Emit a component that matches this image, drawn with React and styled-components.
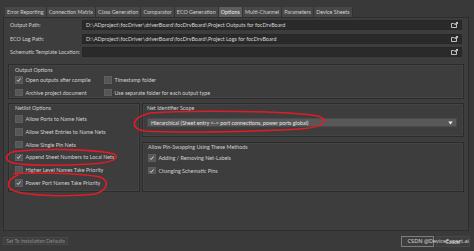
import React from "react";
import styled, { createGlobalStyle } from "styled-components";

const GlobalStyle = createGlobalStyle`
  html, body { margin: 0; padding: 0; background: #3a3a3a; }
  body { font-family: Lato, "Open Sans", sans-serif; }
`;

const Window = styled.div`
  position: relative;
  width: 474px;
  height: 251px;
  overflow: hidden;
  background: #393939;
  color: #d0d0d0;
  font-size: 5.4px;
  display: flex;
  flex-direction: column;
`;

const TabBar = styled.div`
  display: flex;
  margin: 7px 0 0 5px;
  height: 10px;
`;

const Tab = styled.div`
  padding: 0 2.1px;
  line-height: 10px;
  white-space: nowrap;
  background: ${p => (p.$active ? "#5d5d5d" : "#474747")};
  color: ${p => (p.$active ? "#ececec" : "#cfcfcf")};
  border-right: 1px solid #323232;
`;

const Panel = styled.div`
  margin: 0 5px 0 3px;
  height: 210px;
  border: 1px solid #2d2d2d;
  background: #3d3d3d;
  padding: 2px 4px 0 4px;
  display: flex;
  flex-direction: column;
`;

const FieldRow = styled.div`
  display: flex;
  align-items: center;
  height: 10px;
  padding: 0 2px 0 2px;
  margin-bottom: 3.5px;
`;

const FieldLabel = styled.div`
  width: 72px;
  white-space: nowrap;
`;

const Input = styled.div`
  flex: 1;
  height: 10px;
  background: #2a2a2a;
  border: 1px solid #272727;
  box-sizing: border-box;
  display: flex;
  align-items: center;
  padding: 0 3px 0 3px;
  color: #d6d6d6;
  white-space: nowrap;
`;

const InputText = styled.span`
  flex: 1;
`;

const Group = styled.div`
  border: 1px solid #2c2c2c;
  box-shadow: inset 0 0 0 1px #444;
  padding: ${p => p.$pad || "1px 5px 1.5px 6px"};
  display: flex;
  flex-direction: column;
  box-sizing: border-box;
  height: ${p => p.$h};
`;

const GroupTitle = styled.div`
  height: 8px;
  line-height: 8px;
  margin-bottom: ${p => p.$mb || "2px"};
  color: #cfcfcf;
  white-space: nowrap;
`;

const CheckGrid = styled.div`
  display: grid;
  grid-template-columns: 89px auto;
  row-gap: 4.5px;
`;

const CheckList = styled.div`
  display: flex;
  flex-direction: column;
  gap: ${p => p.$gap || "4.8px"};
`;

const CheckRow = styled.div`
  display: flex;
  align-items: center;
  height: 8px;
  gap: 3px;
  white-space: nowrap;
`;

const Box = styled.div`
  width: 7.5px;
  height: 7.5px;
  background: #565656;
  border: 1px solid #5e5e5e;
  box-sizing: border-box;
  display: flex;
  align-items: center;
  justify-content: center;
  flex: none;
`;

const Lower = styled.div`
  display: flex;
  gap: 2px;
  margin-top: 4px;
`;

const RightCol = styled.div`
  flex: 1;
  display: flex;
  flex-direction: column;
  gap: 5px;
`;

const Select = styled.div`
  height: 9px;
  background: #585858;
  border: 1px solid #4a4a4a;
  box-sizing: border-box;
  margin-right: 2px;
  display: flex;
  align-items: center;
  padding: 0 3px;
  color: #e4e4e4;
  white-space: nowrap;
`;

const Footer = styled.div`
  flex: 1;
  display: flex;
  align-items: center;
  justify-content: space-between;
  padding: 0 4px 0 3px;
  background: #3a3a3a;
`;

const Button = styled.div`
  height: ${p => p.$h || "8px"};
  padding: 0 ${p => p.$px || "3px"};
  width: ${p => p.$w || "auto"};
  box-sizing: border-box;
  border: 1px solid ${p => (p.$focus ? "#7a7f82" : "#474747")};
  background: #3e3e3e;
  color: ${p => (p.$dim ? "#8e8e8e" : "#cfcfcf")};
  display: flex;
  align-items: center;
  justify-content: ${p => p.$align || "center"};
  white-space: nowrap;
  font-size: 5px;
`;

const ButtonGroup = styled.div`
  display: flex;
  gap: 2px;
  margin-top: 1px;
`;

const Watermark = styled.div`
  position: absolute;
  right: 5px;
  bottom: 6px;
  color: #f0f0f0;
  font-size: 5.6px;
  font-family: "Open Sans", sans-serif;
  opacity: 0.85;
  white-space: nowrap;
`;

const Marks = styled.svg`
  position: absolute;
  left: 0;
  top: 0;
  pointer-events: none;
`;

function FolderIcon() {
  return (
    <svg width="7" height="6" viewBox="0 0 7 6">
      <path d="M0.5 1.5 H2.5 L3 2 H5.5 V5.5 H0.5 Z" fill="none" stroke="#e6e6e6" strokeWidth="0.8" />
      <path d="M4 2.5 L6.5 0.5 M5 0.5 H6.5 V2" fill="none" stroke="#e6e6e6" strokeWidth="0.8" />
    </svg>
  );
}

function Check({ on, label }) {
  return (
    <CheckRow>
      <Box>
        {on && (
          <svg width="6" height="6" viewBox="0 0 6 6">
            <path d="M1 3.2 L2.4 4.6 L5 1.3" fill="none" stroke="#f2f2f2" strokeWidth="0.9" />
          </svg>
        )}
      </Box>
      <span>{label}</span>
    </CheckRow>
  );
}

const tabs = [
  "Error Reporting",
  "Connection Matrix",
  "Class Generation",
  "Comparator",
  "ECO Generation",
  "Options",
  "Multi-Channel",
  "Parameters",
  "Device Sheets",
];

const fields = [
  ["Output Path:", "D:\\ADproject\\focDriver\\driverBoard\\focDrvBoard\\Project Outputs for focDrvBoard"],
  ["ECO Log Path:", "D:\\ADproject\\focDriver\\driverBoard\\focDrvBoard\\Project Logs for focDrvBoard"],
  ["Schematic Template Location:", ""],
];

const netlist = [
  ["Allow Ports to Name Nets", false],
  ["Allow Sheet Entries to Name Nets", false],
  ["Allow Single Pin Nets", false],
  ["Append Sheet Numbers to Local Nets", true],
  ["Higher Level Names Take Priority", false],
  ["Power Port Names Take Priority", true],
];

export default function App() {
  return (
    <Window>
      <GlobalStyle />
      <TabBar>
        {tabs.map(t => (
          <Tab key={t} $active={t === "Options"}>{t}</Tab>
        ))}
      </TabBar>

      <Panel>
        {fields.map(([label, value]) => (
          <FieldRow key={label}>
            <FieldLabel>{label}</FieldLabel>
            <Input>
              <InputText>{value}</InputText>
              <FolderIcon />
            </Input>
          </FieldRow>
        ))}

        <Group $h="35px" style={{ marginTop: 3.5 }}>
          <GroupTitle>Output Options</GroupTitle>
          <CheckGrid>
            <Check on label="Open outputs after compile" />
            <Check label="Timestamp folder" />
            <Check label="Archive project document" />
            <Check label="Use separate folder for each output type" />
          </CheckGrid>
        </Group>

        <Lower>
          <Group $h="89px" style={{ width: 132 }} $pad="0 4px 0 6px">
            <GroupTitle $mb="3px">Netlist Options</GroupTitle>
            <CheckList>
              {netlist.map(([label, on]) => (
                <Check key={label} on={on} label={label} />
              ))}
            </CheckList>
          </Group>

          <RightCol>
            <Group $h="34px" $pad="0 4px 0 4px">
              <GroupTitle $mb="6px">Net Identifier Scope</GroupTitle>
              <Select>
                <InputText>Hierarchical (Sheet entry &lt;-&gt; port connections, power ports global)</InputText>
                <svg width="5" height="4" viewBox="0 0 5 4">
                  <path d="M0.3 0.6 H4.7 L2.5 3.4 Z" fill="#f0f0f0" />
                </svg>
              </Select>
            </Group>
            <Group $h="50px" $pad="0 4px 0 5px">
              <GroupTitle $mb="3px">Allow Pin-Swapping Using These Methods</GroupTitle>
              <CheckList $gap="4.5px">
                <Check on label="Adding / Removing Net-Labels" />
                <Check on label="Changing Schematic Pins" />
              </CheckList>
            </Group>
          </RightCol>
        </Lower>
      </Panel>

      <Footer>
        <Button $dim $w="65px">Set To Installation Defaults</Button>
        <ButtonGroup>
          <Button $focus $h="11px" $w="33px" />
          <Button $h="11px" $w="34px">Cancel</Button>
        </ButtonGroup>
      </Footer>
      <Watermark>CSDN @DeviceExpert.ai</Watermark>

      <Marks width="474" height="251" viewBox="0 0 474 251">
        <g fill="none" stroke="#e01c28" strokeWidth="1.6" strokeLinecap="round">
          <path d="M150 113 C190 110 290 111 318 116 C330 120 326 127 300 129 C250 132 175 133 145 131 C130 129 130 118 150 113" />
          <path d="M12 152 C40 148 95 149 114 154 C121 158 112 163 90 164 C60 166 22 166 10 162 C4 159 6 153 16 151" />
          <path d="M14 174 C30 172 80 173 100 177 C110 181 108 190 95 194 C70 197 30 196 14 191 C6 187 6 180 18 175" />
        </g>
      </Marks>
    </Window>
  );
}
